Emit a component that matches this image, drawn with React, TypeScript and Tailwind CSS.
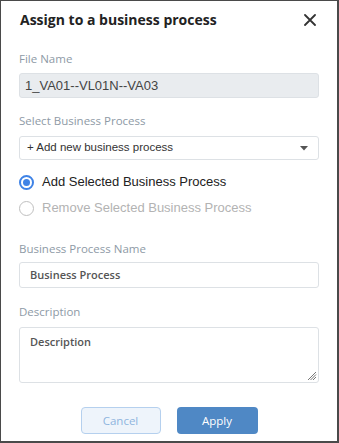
import React from "react";

const labelCls =
  "block text-[11.5px] leading-[16px] text-[#8e9aa6] font-['Open_Sans',sans-serif]";

function Radio({ checked, label }: { checked: boolean; label: string }) {
  return (
    <div className="flex items-center h-[20px]">
      <div
        className={
          checked
            ? "w-[15px] h-[15px] rounded-full border-2 border-[#3f83e6] flex items-center justify-center"
            : "w-[15px] h-[15px] rounded-full border-[1.5px] border-[#bfbfbf]"
        }
      >
        {checked && <div className="w-[7px] h-[7px] rounded-full bg-[#3f83e6]" />}
      </div>
      <span
        className={
          "ml-[8px] text-[13px] leading-[20px] font-['Liberation_Sans',Arial,sans-serif] " +
          (checked ? "text-[#222]" : "text-[#b3b3b3]")
        }
      >
        {label}
      </span>
    </div>
  );
}

export default function App() {
  return (
    <div className="w-[339px] h-[443px] box-border bg-white border-t border-l border-r-2 border-b-2 border-[#4a4a4a] px-[18px] flex flex-col">
      <div className="flex items-center justify-between h-[20px] mt-[9px]">
        <span className="text-[14px] leading-[20px] font-bold text-[#222] font-['Open_Sans',sans-serif] ml-[1px]">
          Assign to a business process
        </span>
        <svg width="12" height="12" viewBox="0 0 12 12" className="mr-[3px]">
          <path d="M1 1L11 11M11 1L1 11" stroke="#333" strokeWidth="1.8" strokeLinecap="round" />
        </svg>
      </div>

      <label className={labelCls + " mt-[21px]"}>File Name</label>
      <div className="mt-[6px] h-[25px] rounded-[3px] border border-[#dde1e5] bg-[#e9ecef] flex items-center px-[5px] text-[13px] text-[#444] font-['Liberation_Sans',Arial,sans-serif]">
        1_VA01--VL01N--VA03
      </div>

      <label className={labelCls + " mt-[15px]"}>Select Business Process</label>
      <div className="mt-[7px] h-[24px] rounded-[3px] border border-[#dde1e5] bg-white flex items-center justify-between pl-[7px] pr-[10px] text-[11.5px] text-[#333] font-['Liberation_Sans',Arial,sans-serif]">
        <span>+ Add new business process</span>
        <svg width="8" height="5" viewBox="0 0 8 5">
          <path d="M0 0H8L4 4.5Z" fill="#555" />
        </svg>
      </div>

      <div className="mt-[12px] flex flex-col gap-[6px]">
        <Radio checked label="Add Selected Business Process" />
        <Radio checked={false} label="Remove Selected Business Process" />
      </div>

      <label className={labelCls + " mt-[23px]"}>Business Process Name</label>
      <div className="mt-[5px] h-[26px] rounded-[3px] border border-[#dde1e5] bg-white flex items-center px-[10px] text-[11px] font-semibold text-[#555] font-['Open_Sans',sans-serif]">
        Business Process
      </div>

      <label className={labelCls + " mt-[16px]"}>Description</label>
      <div className="relative mt-[7px] h-[56px] rounded-[3px] border border-[#dde1e5] bg-white px-[10px] pt-[6px] text-[11px] font-semibold text-[#555] font-['Open_Sans',sans-serif]">
        Description
        <svg width="10" height="10" viewBox="0 0 10 10" className="absolute right-[1px] bottom-[1px]">
          <path d="M9 1L1 9M9 3.5L3.5 9M9 6L6 9" stroke="#777" strokeWidth="1" />
        </svg>
      </div>

      <div className="mt-[24px] flex justify-center gap-[16px]">
        <button className="w-[80px] h-[27px] rounded-[4px] border border-[#b5d0ee] bg-[#eef4fb] text-[11.5px] text-[#8fb4de] font-['Open_Sans',sans-serif]">
          Cancel
        </button>
        <button className="w-[81px] h-[27px] rounded-[4px] bg-[#4f88c5] text-[11.5px] text-white font-['Open_Sans',sans-serif]">
          Apply
        </button>
      </div>
    </div>
  );
}
